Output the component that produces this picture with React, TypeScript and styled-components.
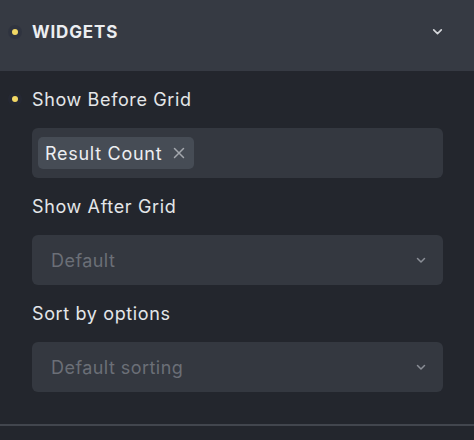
import React from 'react';
import styled, { createGlobalStyle } from 'styled-components';

const GlobalStyle = createGlobalStyle`
  html, body {
    margin: 0;
    padding: 0;
    background: #23262d;
  }

  body {
    font-family: Inter, 'Noto Sans', sans-serif;
    -webkit-font-smoothing: antialiased;
  }
`;

function Chevron({ size = 12, color }: { size?: number; color: string }) {
  return (
    <svg width={size} height={size} viewBox="0 0 12 12" fill="none">
      <path
        d="M2.5 4.5 6 8l3.5-3.5"
        stroke={color}
        strokeWidth="1.5"
        strokeLinecap="round"
        strokeLinejoin="round"
      />
    </svg>
  );
}

function Cross() {
  return (
    <svg width="12" height="12" viewBox="0 0 12 12" fill="none">
      <path
        d="M1.5 1.5l9 9M10.5 1.5l-9 9"
        stroke="#a3a7ad"
        strokeWidth="1.5"
        strokeLinecap="round"
      />
    </svg>
  );
}

const fields = [
  { label: 'Show After Grid', placeholder: 'Default' },
  { label: 'Sort by options', placeholder: 'Default sorting' },
];

function App() {
  return (
    <>
      <GlobalStyle />
      <Panel>
        <Header>
          <Indicator>
            <Dot />
          </Indicator>
          <Title>WIDGETS</Title>
          <Toggle>
            <Chevron size={13} color="#d4d6da" />
          </Toggle>
        </Header>

        <Body>
          <Field>
            <LabelRow>
              <Indicator>
                <Dot />
              </Indicator>
              <Label>Show Before Grid</Label>
            </LabelRow>
            <TagBox>
              <Tag>
                Result Count
                <Remove>
                  <Cross />
                </Remove>
              </Tag>
            </TagBox>
          </Field>

          {fields.map((f) => (
            <Field key={f.label}>
              <LabelRow>
                <Indicator />
                <Label>{f.label}</Label>
              </LabelRow>
              <Select>
                <Placeholder>{f.placeholder}</Placeholder>
                <Chevron color="#8a8e96" />
              </Select>
            </Field>
          ))}
        </Body>
      </Panel>
    </>
  );
}

export default App;

const Panel = styled.div`
  width: 474px;
  height: 440px;
  background: #23262d;
  overflow: hidden;
`;

const Header = styled.div`
  display: flex;
  align-items: center;
  height: 71px;
  padding: 0 30px 8px 0;
  box-sizing: border-box;
  background: #363a43;
`;

const Indicator = styled.div`
  display: flex;
  align-items: center;
  justify-content: center;
  flex: 0 0 30px;
  width: 30px;
  margin-right: 2px;
`;

const Dot = styled.span`
  width: 6px;
  height: 6px;
  border-radius: 50%;
  background: #f2d865;
  box-shadow: 0 0 0 4px rgba(40, 44, 60, 0.45);
`;

const Title = styled.h2`
  flex: 1;
  margin: 0;
  font-size: 17px;
  font-weight: 700;
  letter-spacing: 0.05em;
  color: #eceef1;
`;

const Toggle = styled.span`
  display: flex;
`;

const Body = styled.div`
  display: flex;
  flex-direction: column;
  gap: 14px;
  padding: 14px 31px 32px 0;
  border-bottom: 2px solid #42464e;
`;

const Field = styled.div`
  display: flex;
  flex-direction: column;
  gap: 15px;
`;

const LabelRow = styled.div`
  display: flex;
  align-items: center;
  height: 28px;
`;

const Label = styled.span`
  font-size: 18px;
  letter-spacing: 0.035em;
  color: #e4e6e9;
`;

const TagBox = styled.div`
  display: flex;
  align-items: center;
  height: 50px;
  margin-left: 32px;
  padding: 0 6px;
  box-sizing: border-box;
  border-radius: 6px;
  background: #343840;
`;

const Tag = styled.span`
  display: flex;
  align-items: center;
  gap: 11px;
  height: 32px;
  padding: 0 9px 0 7px;
  border-radius: 5px;
  background: #464c55;
  font-size: 18px;
  letter-spacing: 0.04em;
  color: #eceef1;
`;

const Remove = styled.span`
  display: flex;
`;

const Select = styled.div`
  display: flex;
  align-items: center;
  justify-content: space-between;
  height: 50px;
  margin-left: 32px;
  padding: 0 16px 0 19px;
  box-sizing: border-box;
  border-radius: 6px;
  background: #343840;
`;

const Placeholder = styled.span`
  font-size: 18px;
  letter-spacing: 0.025em;
  color: #6b6f77;
`;
